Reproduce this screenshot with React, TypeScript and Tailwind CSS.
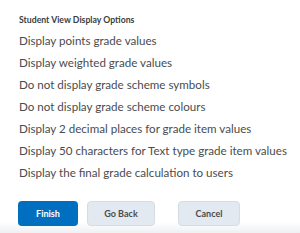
const options = [
  'Display points grade values',
  'Display weighted grade values',
  'Do not display grade scheme symbols',
  'Do not display grade scheme colours',
  'Display 2 decimal places for grade item values',
  'Display 50 characters for Text type grade item values',
  'Display the final grade calculation to users',
];

function App() {
  return (
    <div className="w-[300px] h-[233px] bg-white overflow-hidden font-['Lato',sans-serif] text-[#494c4e] flex flex-col">
      <div className="pl-[19px] pt-[14px]">
        <h2 className="text-[8.7px] font-bold leading-[12px] text-[#3b3d3f]">Student View Display Options</h2>
        <ul className="mt-[4px] flex flex-col">
          {options.map((opt) => (
            <li key={opt} className="text-[11.6px] leading-[22px] whitespace-nowrap">
              {opt}
            </li>
          ))}
        </ul>
      </div>
      <div className="flex-1 pl-[18px] pt-[17px] bg-[linear-gradient(to_bottom,#ffffff_78%,#eef0f2)]">
        <div className="flex items-center">
          <button className="w-[60px] h-[25px] rounded-[4px] bg-[#006fbf] text-white text-[9px] font-bold">
            Finish
          </button>
          <button className="ml-[9px] w-[68px] h-[25px] rounded-[4px] bg-[#e3e9f1] border border-[#d6dce5] text-[#494c4e] text-[9px] font-bold">
            Go Back
          </button>
          <button className="ml-[23px] w-[62px] h-[25px] rounded-[4px] bg-[#e3e9f1] border border-[#d6dce5] text-[#494c4e] text-[9px] font-bold">
            Cancel
          </button>
        </div>
      </div>
    </div>
  );
}

export default App;
